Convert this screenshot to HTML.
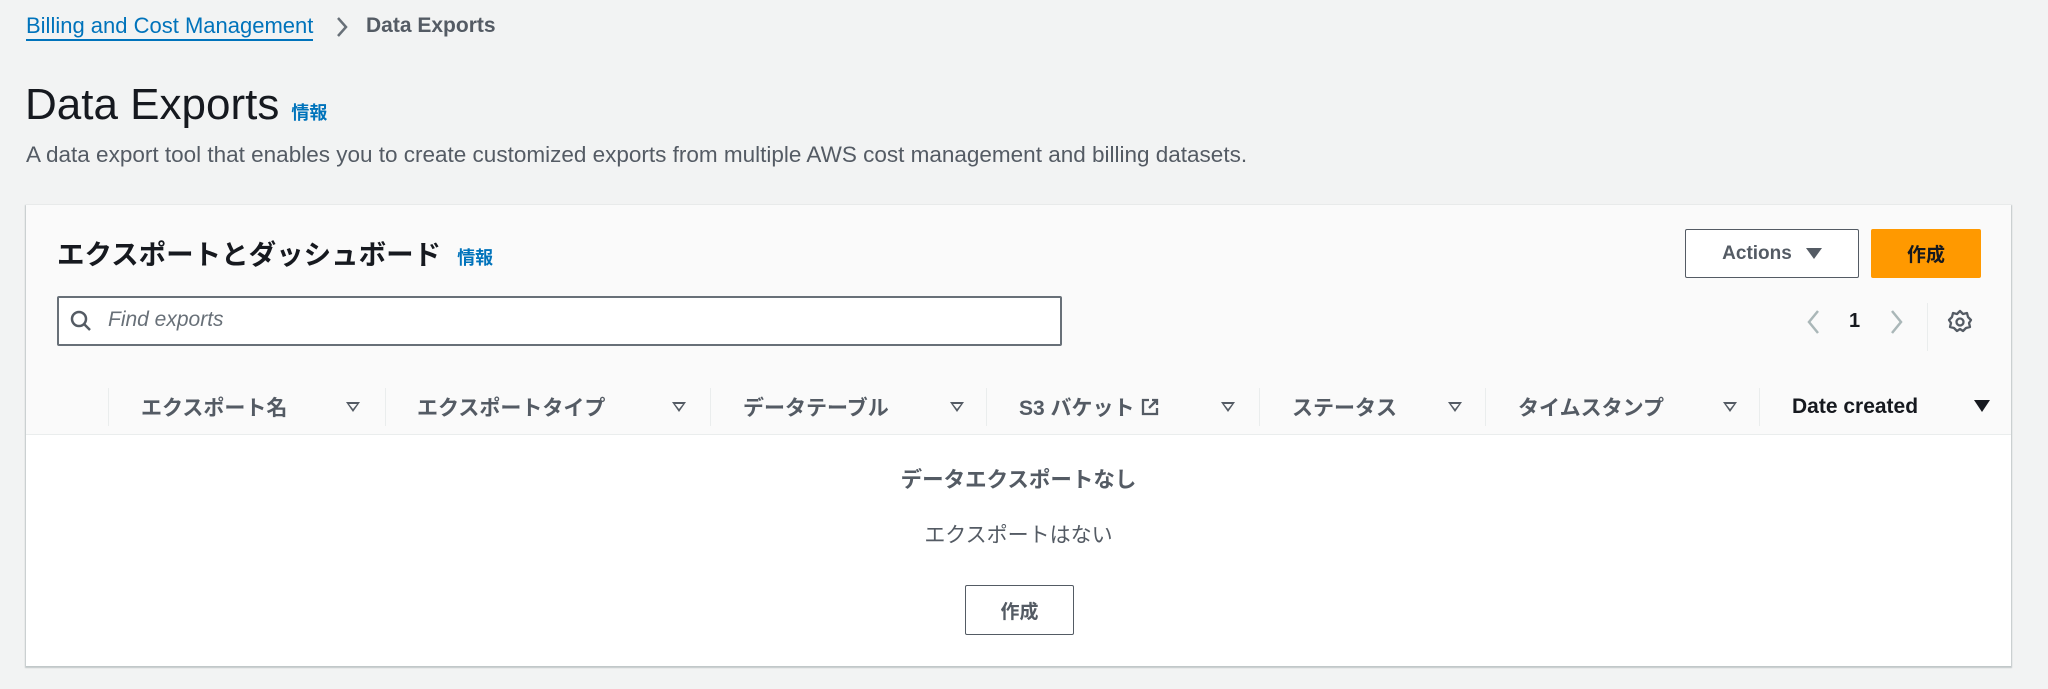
<!DOCTYPE html>
<html><head><meta charset="utf-8"><style>
*{box-sizing:border-box;margin:0;padding:0}
body{width:2048px;height:689px;background:#f2f3f3;font-family:"Liberation Sans","Noto Sans CJK JP",sans-serif;color:#16191f;position:relative;overflow:hidden}
.a{position:absolute;white-space:nowrap}
.info{color:#0073bb;font-weight:bold;font-size:18px}
.card{position:absolute;left:26px;top:205px;width:1985px;height:461px;background:#fff;box-shadow:0 1px 1px 1px rgba(0,28,36,.2);}
.top{position:absolute;left:0;top:0;width:100%;height:230px;background:#fafafa;border-bottom:1px solid #eaeded}
.hd{font-size:21px;font-weight:bold;color:#545b64}
.div{position:absolute;top:183px;width:1px;height:38px;background:#eaeded}
.tri{position:absolute;top:197px;width:0;height:0;border-left:7px solid transparent;border-right:7px solid transparent;border-top:10px solid #545b64}
.tri i{position:absolute;left:-4px;top:-8px;border-left:4px solid transparent;border-right:4px solid transparent;border-top:5px solid #fafafa}
.btn{position:absolute;border:1px solid #545b64;border-radius:2px;background:#fff;font-weight:bold;font-size:19px;color:#545b64;display:flex;align-items:center;justify-content:center}
</style></head><body>
<div class="a" style="left:26px;top:12px;font-size:22px;color:#0073bb;border-bottom:2px solid #0073bb;line-height:27px">Billing and Cost Management</div>
<svg class="a" style="left:335px;top:16px" width="14" height="22"><path d="M3 2l8 9-8 9" fill="none" stroke="#687078" stroke-width="2.5"/></svg>
<div class="a" style="left:366px;top:14px;font-size:21px;color:#545b64;font-weight:bold">Data Exports</div>
<div class="a" style="left:25px;top:79px;font-size:44px;line-height:52px">Data Exports<span class="info" style="margin-left:12px">情報</span></div>
<div class="a" style="left:26px;top:142px;font-size:22.5px;color:#545b64">A data export tool that enables you to create customized exports from multiple AWS cost management and billing datasets.</div>
<div class="card">
<div class="top"></div>
<div class="a" style="left:31px;top:27px;font-size:27.5px;font-weight:bold">エクスポートとダッシュボード<span class="info" style="margin-left:16px">情報</span></div>
<div class="btn" style="left:1659px;top:24px;width:174px;height:49px">Actions <span style="margin-left:14px;border-left:8px solid transparent;border-right:8px solid transparent;border-top:11px solid #545b64"></span></div>
<div class="btn" style="left:1845px;top:24px;width:110px;height:49px;background:#ff9900;border-color:#ff9900;color:#16191f">作成</div>
<div class="a" style="left:31px;top:91px;width:1005px;height:50px;border:2px solid #687078;border-radius:2px;background:#fff"></div>
<svg class="a" style="left:43px;top:104px" width="24" height="24"><circle cx="10" cy="10" r="7" fill="none" stroke="#545b64" stroke-width="2.5"/><path d="M15 15l6 6" stroke="#545b64" stroke-width="2.5"/></svg>
<div class="a" style="left:82px;top:103px;font-size:21px;font-style:italic;color:#687078">Find exports</div>
<svg class="a" style="left:1780px;top:104px" width="14" height="26"><path d="M12 2L3 13l9 11" fill="none" stroke="#aab7b8" stroke-width="2.5"/></svg>
<div class="a" style="left:1823px;top:105px;font-size:20px;font-weight:bold">1</div>
<svg class="a" style="left:1864px;top:104px" width="14" height="26"><path d="M2 2l9 11-9 11" fill="none" stroke="#aab7b8" stroke-width="2.5"/></svg>
<div class="a" style="left:1901px;top:98px;width:1px;height:48px;background:#eaeded"></div>
<svg class="a" style="left:1921px;top:104px" width="26" height="26" viewBox="0 0 26 26"><path d="M13 2l3 3 4-1 1 4 3 3-2 3 1 4-4 1-3 3-3-2-3 2-3-3-4-1 1-4-2-3 3-3 1-4 4 1z" fill="none" stroke="#545b64" stroke-width="2.3" stroke-linejoin="round"/><circle cx="13" cy="13" r="3.5" fill="none" stroke="#545b64" stroke-width="2.3"/></svg>
<div class="div" style="left:82px"></div><div class="div" style="left:359px"></div><div class="div" style="left:684px"></div><div class="div" style="left:960px"></div><div class="div" style="left:1233px"></div><div class="div" style="left:1459px"></div><div class="div" style="left:1733px"></div>
<div class="a hd" style="left:115px;top:187px">エクスポート名</div>
<div class="a hd" style="left:391px;top:187px">エクスポートタイプ</div>
<div class="a hd" style="left:717px;top:187px">データテーブル</div>
<div class="a hd" style="left:993px;top:187px">S3 バケット <svg width="20" height="20" style="vertical-align:-2px"><path d="M9 3H3v14h14v-6M12 3h5v5M17 3l-8 8" fill="none" stroke="#545b64" stroke-width="2.3"/></svg></div>
<div class="a hd" style="left:1266px;top:187px">ステータス</div>
<div class="a hd" style="left:1492px;top:187px">タイムスタンプ</div>
<div class="a hd" style="left:1766px;top:190px;color:#16191f">Date created</div>
<div class="tri" style="left:320px"><i></i></div><div class="tri" style="left:646px"><i></i></div><div class="tri" style="left:924px"><i></i></div><div class="tri" style="left:1195px"><i></i></div><div class="tri" style="left:1422px"><i></i></div><div class="tri" style="left:1697px"><i></i></div>
<div class="tri" style="left:1948px;top:195px;border-top-color:#16191f;border-left-width:8px;border-right-width:8px;border-top-width:12px"></div>
<div class="a" style="left:0;width:1985px;text-align:center;top:258px;font-size:21.5px;font-weight:bold;color:#545b64">データエクスポートなし</div>
<div class="a" style="left:0;width:1985px;text-align:center;top:314px;font-size:21px;color:#545b64">エクスポートはない</div>
<div class="btn" style="left:939px;top:380px;width:109px;height:50px">作成</div>
</div>
</body></html>
